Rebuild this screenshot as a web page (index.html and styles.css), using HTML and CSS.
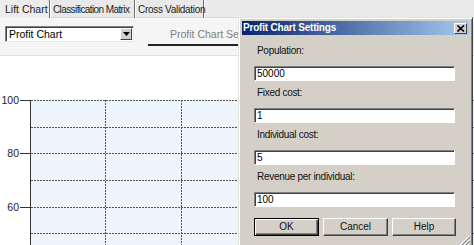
FILE: index.html
```html
<!DOCTYPE html>
<html>
<head>
<meta charset="utf-8">
<link rel="stylesheet" href="styles.css">
</head>
<body>
<div class="app">
  <div class="tabs">
    <div class="tab tab-active tab-lift">Lift Chart</div>
    <div class="tab tab-class">Classification Matrix</div>
    <div class="tab tab-cross">Cross Validation</div>
  </div>
  <div class="toolbar">
    <div class="select">
      <span class="select-text">Profit Chart</span>
      <span class="select-btn"><svg width="7" height="4" viewBox="0 0 7 4"><path d="M0 0H7L3.5 4Z" fill="#000"/></svg></span>
    </div>
    <div class="settings-btn"><span class="settings-text">Profit Chart Settings</span></div>
  </div>
  <div class="chart">
    <svg class="chart-svg" width="474" height="189" viewBox="0 56 474 189">
      <rect x="31" y="100" width="443" height="145" fill="#eef5fc"/>
      <g stroke="#555" stroke-width="1" stroke-dasharray="2,1" shape-rendering="crispEdges">
        <line x1="31" y1="100.5" x2="474" y2="100.5"/>
        <line x1="31" y1="127.5" x2="474" y2="127.5"/>
        <line x1="31" y1="153.5" x2="474" y2="153.5"/>
        <line x1="31" y1="180.5" x2="474" y2="180.5"/>
        <line x1="31" y1="207.5" x2="474" y2="207.5"/>
        <line x1="31" y1="233.5" x2="474" y2="233.5"/>
        <line x1="105.5" y1="100" x2="105.5" y2="245"/>
        <line x1="181.5" y1="100" x2="181.5" y2="245"/>
        <line x1="257.5" y1="100" x2="257.5" y2="245"/>
      </g>
      <g stroke="#333" stroke-width="1" shape-rendering="crispEdges">
        <line x1="30.5" y1="100" x2="30.5" y2="245"/>
        <line x1="20" y1="100.5" x2="31" y2="100.5"/>
        <line x1="20" y1="153.5" x2="31" y2="153.5"/>
        <line x1="20" y1="207.5" x2="31" y2="207.5"/>
      </g>
    </svg>
    <div class="axis-labels">
      <span class="axis-label l100">100</span>
      <span class="axis-label l80">80</span>
      <span class="axis-label l60">60</span>
    </div>
  </div>

  <div class="dialog">
    <div class="titlebar">
      <span class="title">Profit Chart Settings</span>
      <span class="close"><svg width="8" height="7" viewBox="0 0 8 7"><path d="M0.5 0.5L7 6.5M7 0.5L0.5 6.5" stroke="#000" stroke-width="1.6"/></svg></span>
    </div>
    <div class="dlg-body">
      <div class="field">
        <div class="label">Population:</div>
        <div class="input">50000</div>
      </div>
      <div class="field">
        <div class="label">Fixed cost:</div>
        <div class="input">1</div>
      </div>
      <div class="field">
        <div class="label">Individual cost:</div>
        <div class="input">5</div>
      </div>
      <div class="field">
        <div class="label">Revenue per individual:</div>
        <div class="input">100</div>
      </div>
      <div class="buttons">
        <div class="btn btn-default">OK</div>
        <div class="btn">Cancel</div>
        <div class="btn btn-help">Help</div>
      </div>
    </div>
    <svg class="grip" width="10" height="10" viewBox="0 0 10 10">
      <g stroke="#fff" stroke-width="1"><line x1="9" y1="0" x2="0" y2="9"/><line x1="9" y1="4" x2="4" y2="9"/><line x1="9" y1="8" x2="8" y2="9"/></g>
      <g stroke="#808080" stroke-width="1"><line x1="10" y1="1" x2="1" y2="10"/><line x1="10" y1="5" x2="5" y2="10"/></g>
    </svg>
  </div>
</div>
</body>
</html>
```
FILE: styles.css
```css
* { box-sizing: border-box; }
html, body { margin: 0; padding: 0; }
body {
  width: 474px;
  height: 245px;
  overflow: hidden;
  font-family: "Liberation Sans", Arial, sans-serif;
  font-size: 10px;
  color: #000;
  background: #fff;
}
.app {
  position: relative;
  width: 474px;
  height: 245px;
  overflow: hidden;
}
.tabs {
  display: flex;
  height: 18px;
  background: #e9e9e9;
  border-bottom: 1px solid #d8d8d8;
}
.tab {
  height: 18px;
  padding: 4px 0 0 0;
  line-height: 11px;
  white-space: nowrap;
  border-right: 1px solid #6a6a6a;
  box-shadow: 1px 0 0 #fff;
  color: #222;
  font-size: 10px;
}
.tab-lift { width: 50px; padding-left: 5px; background: #ececec; font-size: 10.5px; }
.tab-class { width: 85px; padding-left: 3px; letter-spacing: -0.6px; }
.tab-cross { width: 69px; padding-left: 3px; letter-spacing: -0.3px; }

.toolbar {
  height: 38px;
  background: #f5f5f5;
  border-bottom: 1px solid #e0e0e0;
  display: flex;
  align-items: flex-start;
  padding: 8px 0 0 5px;
}
.select {
  width: 129px;
  height: 16px;
  background: #fff;
  border-top: 1px solid #808080;
  border-left: 1px solid #808080;
  border-right: 1px solid #e8e8e8;
  border-bottom: 1px solid #e8e8e8;
  box-shadow: inset 1px 1px 0 #404040;
  display: flex;
  align-items: center;
  padding-left: 3px;
}
.select-text { flex: 1; font-size: 10.5px; line-height: 12px; }
.select-btn {
  width: 12px;
  height: 12px;
  margin-right: 1px;
  background: #d4d0c8;
  border-top: 1px solid #fff;
  border-left: 1px solid #fff;
  border-right: 1px solid #404040;
  border-bottom: 1px solid #404040;
  display: flex;
  align-items: center;
  justify-content: center;
}
.settings-btn {
  margin-left: 14px;
  margin-top: -2px;
  width: 90px;
  height: 22px;
  padding: 4px 0 0 22px;
  color: #808080;
  font-size: 10.5px;
  line-height: 12px;
  border-bottom: 2px solid #222;
  white-space: nowrap;
  overflow: hidden;
}
.settings-text { display: block; width: 68px; overflow: hidden; }

.chart {
  position: relative;
  height: 189px;
  background: #fff;
}
.chart-svg { display: block; }
.axis-labels { position: absolute; left: 0; top: 0; width: 20px; }
.axis-label {
  position: absolute;
  right: 1px;
  font-size: 10.5px;
  line-height: 12px;
  color: #222;
}
.l100 { top: 38px; }
.l80 { top: 91px; }
.l60 { top: 145px; }

.dialog {
  position: absolute;
  left: 238px;
  top: 17px;
  width: 235px;
  height: 232px;
  background: #d4d0c8;
  border-top: 1px solid #e4e2dc;
  border-left: 1px solid #e4e2dc;
  border-right: 1px solid #404040;
  box-shadow: inset 1px 1px 0 #fff, inset -1px 0 0 #808080;
  padding: 3px 3px 0 3px;
}
.titlebar {
  height: 14px;
  background: linear-gradient(to right, #0a246a, #a6caf0);
  display: flex;
  align-items: center;
  justify-content: space-between;
  padding: 0 2px 0 1px;
}
.title {
  color: #fff;
  font-weight: bold;
  font-size: 10px;
  line-height: 12px;
  letter-spacing: -0.2px;
  white-space: nowrap;
}
.close {
  width: 13px;
  height: 11px;
  background: #d4d0c8;
  border-top: 1px solid #fff;
  border-left: 1px solid #fff;
  border-right: 1px solid #404040;
  border-bottom: 1px solid #404040;
  display: flex;
  align-items: center;
  justify-content: center;
}
.dlg-body {
  padding: 10px 0 0 12px;
  display: flex;
  flex-direction: column;
}
.field { display: flex; flex-direction: column; }
.label {
  padding-left: 3px;
  line-height: 12px;
  height: 12px;
  font-size: 10px;
  color: #111;
  letter-spacing: -0.3px;
  margin-bottom: 9px;
}
.input {
  width: 201px;
  height: 15px;
  background: #fff;
  border-top: 1px solid #808080;
  border-left: 1px solid #808080;
  border-right: 1px solid #fff;
  border-bottom: 1px solid #fff;
  box-shadow: inset 1px 1px 0 #404040;
  padding: 1px 0 0 2px;
  font-size: 10px;
  line-height: 12px;
  margin-bottom: 6px;
}
.buttons {
  display: flex;
  gap: 4px;
  margin-top: 5px;
}
.btn {
  width: 65px;
  height: 18px;
  background: #d4d0c8;
  border-top: 1px solid #fff;
  border-left: 1px solid #fff;
  border-right: 1px solid #404040;
  border-bottom: 1px solid #404040;
  box-shadow: inset -1px -1px 0 #808080;
  text-align: center;
  font-size: 10px;
  line-height: 15px;
  color: #111;
}
.btn-default {
  border: 1px solid #000;
  box-shadow: inset 1px 1px 0 #fff, inset -1px -1px 0 #404040, inset -2px -2px 0 #808080;
}
.btn-help { width: 64px; }
.grip {
  position: absolute;
  right: 2px;
  bottom: 3px;
}
```
